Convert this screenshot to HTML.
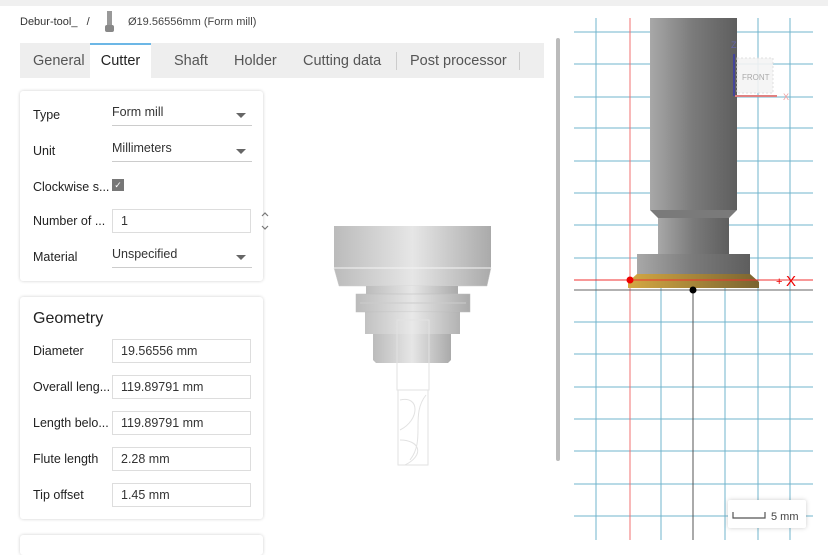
<!DOCTYPE html>
<html><head><style>
*{box-sizing:border-box;margin:0;padding:0}
body{width:828px;height:540px;overflow:hidden;background:#fff;font-family:"Liberation Sans",sans-serif;color:#222;position:relative}
.a{position:absolute}
.lab{position:absolute;left:13px;font-size:12.5px;color:#222}
.dd{position:absolute;left:92px;width:140px;height:23px;border-bottom:1px solid #ccc;font-size:12.5px;color:#333;padding-top:2px}
.dd:after{content:"";position:absolute;right:6px;top:10px;border:5px solid transparent;border-top:5px solid #666;border-bottom:none}
.in{position:absolute;left:92px;width:139px;height:24px;border:1px solid #ddd;font-size:12.5px;color:#333;padding:4px 8px}
.card{position:absolute;left:20px;width:243px;background:#fff;border-radius:3px;box-shadow:0 0 3px rgba(0,0,0,.2)}
.tab{position:absolute;top:0;height:35px;line-height:37px;font-size:14.5px;color:#555}
</style></head><body>
<div class="a" style="left:0;top:0;width:828px;height:6px;background:#f0f0f0"></div>
<div class="a" style="left:20px;top:16px;font-size:11px;color:#333">Debur-tool_ &nbsp; /</div>
<svg class="a" style="left:102px;top:11px" width="14" height="24"><rect x="5" y="0" width="5" height="15" fill="#999"/><rect x="3" y="14" width="9" height="7" rx="2" fill="#888"/></svg>
<div class="a" style="left:128px;top:16px;font-size:11px;color:#444">Ø19.56556mm (Form mill)</div>
<div class="a" style="left:20px;top:43px;width:524px;height:35px;background:#eee">
<div class="tab" style="left:13px">General</div>
<div class="tab" style="left:70px;width:61px;background:#fff;border-top:2px solid #6cb7e6;color:#222;text-align:center;line-height:33px">Cutter</div>
<div class="tab" style="left:154px">Shaft</div>
<div class="tab" style="left:214px">Holder</div>
<div class="tab" style="left:283px">Cutting data</div>
<div class="a" style="left:376px;top:9px;width:1px;height:18px;background:#ccc"></div>
<div class="tab" style="left:390px">Post processor</div>
<div class="a" style="left:499px;top:9px;width:1px;height:18px;background:#ccc"></div>
</div>
<div class="a" style="left:556px;top:38px;width:4px;height:423px;background:#bbb;border-radius:2px"></div>
<div class="card" style="top:91px;height:190px">
<div class="lab" style="top:17px">Type</div><div class="dd" style="top:12px">Form mill</div>
<div class="lab" style="top:53px">Unit</div><div class="dd" style="top:48px">Millimeters</div>
<div class="lab" style="top:89px">Clockwise s...</div><div class="a" style="left:92px;top:88px;width:12px;height:12px;background:#777;color:#fff;font-size:9px;text-align:center;line-height:12px">✓</div>
<div class="lab" style="top:123px">Number of ...</div><div class="in" style="top:118px">1</div>
<svg class="a" style="left:240px;top:119px" width="10" height="22"><path d="M2,6 L5,3 L8,6 M2,16 L5,19 L8,16" fill="none" stroke="#777" stroke-width="1.2"/></svg>
<div class="lab" style="top:159px">Material</div><div class="dd" style="top:154px">Unspecified</div>
</div>
<div class="card" style="top:297px;height:222px">
<div class="a" style="left:13px;top:13px;font-size:16px;color:#222">Geometry</div>
<div class="lab" style="top:47px">Diameter</div><div class="in" style="top:42px">19.56556 mm</div>
<div class="lab" style="top:83px">Overall leng...</div><div class="in" style="top:78px">119.89791 mm</div>
<div class="lab" style="top:119px">Length belo...</div><div class="in" style="top:114px">119.89791 mm</div>
<div class="lab" style="top:155px">Flute length</div><div class="in" style="top:150px">2.28 mm</div>
<div class="lab" style="top:191px">Tip offset</div><div class="in" style="top:186px">1.45 mm</div>
</div>
<div class="card" style="top:535px;height:20px"></div>
<svg class="a" style="left:0;top:0" width="828" height="540">
<defs>
<linearGradient id="h" x1="0" x2="1"><stop offset="0" stop-color="#bbb"/><stop offset=".5" stop-color="#e6e6e6"/><stop offset="1" stop-color="#aaa"/></linearGradient>
<linearGradient id="s" x1="0" x2="1"><stop offset="0" stop-color="#a8a8a8"/><stop offset=".5" stop-color="#7a7a7a"/><stop offset="1" stop-color="#5e5e5e"/></linearGradient>
<linearGradient id="g" x1="0" x2="1"><stop offset="0" stop-color="#d4a843"/><stop offset="1" stop-color="#7a6430"/></linearGradient>
</defs>
<rect x="334" y="226" width="157" height="42" fill="url(#h)"/>
<polygon points="334,268 491,268 487,286 339,286" fill="url(#h)" stroke="#ccc" stroke-width=".5"/>
<line x1="334" y1="268" x2="491" y2="268" stroke="#f4f4f4"/>
<rect x="366" y="286" width="92" height="8" fill="url(#h)"/>
<rect x="356" y="294" width="114" height="18" fill="url(#h)" stroke="#bbb" stroke-width=".5"/>
<line x1="360" y1="303" x2="466" y2="303" stroke="#ccc"/>
<rect x="365" y="312" width="95" height="22" fill="url(#h)" opacity=".9"/>
<polygon points="373,334 451,334 451,360 448,363 376,363 373,360" fill="url(#h)"/>
<g fill="none" stroke="#e2e2e2"><rect x="397" y="320" width="32" height="70"/><rect x="398" y="390" width="30" height="75"/><path d="M400,400 C420,395 420,420 400,430 M426,395 C410,415 426,440 410,460 M400,440 C420,440 425,455 405,465"/></g>
<g stroke="#70b4cc" stroke-width="1">
<line x1="596" y1="18" x2="596" y2="540"/><line x1="661" y1="18" x2="661" y2="540"/><line x1="693" y1="18" x2="693" y2="540"/><line x1="725" y1="18" x2="725" y2="540"/><line x1="758" y1="18" x2="758" y2="540"/><line x1="790" y1="18" x2="790" y2="540"/>
<line x1="574" y1="32" x2="813" y2="32"/><line x1="574" y1="64" x2="813" y2="64"/><line x1="574" y1="97" x2="813" y2="97"/><line x1="574" y1="128" x2="813" y2="128"/><line x1="574" y1="161" x2="813" y2="161"/><line x1="574" y1="193" x2="813" y2="193"/><line x1="574" y1="225" x2="813" y2="225"/><line x1="574" y1="258" x2="813" y2="258"/><line x1="574" y1="322" x2="813" y2="322"/><line x1="574" y1="354" x2="813" y2="354"/><line x1="574" y1="387" x2="813" y2="387"/><line x1="574" y1="419" x2="813" y2="419"/><line x1="574" y1="451" x2="813" y2="451"/><line x1="574" y1="484" x2="813" y2="484"/><line x1="574" y1="516" x2="813" y2="516"/>
</g>
<line x1="630" y1="18" x2="630" y2="540" stroke="#f07070"/>
<line x1="693" y1="290" x2="693" y2="540" stroke="#555"/>
<line x1="574" y1="290" x2="813" y2="290" stroke="#666"/>
<rect x="650" y="18" width="87" height="192" fill="url(#s)"/>
<polygon points="650,210 737,210 729,218 658,218" fill="#7a7a7a"/>
<rect x="658" y="218" width="71" height="36" fill="url(#s)"/>
<rect x="637" y="254" width="113" height="20" fill="url(#s)"/>
<polygon points="637,274 750,274 759,282 759,288 628,288 628,282" fill="url(#g)"/>
<line x1="574" y1="280" x2="813" y2="280" stroke="#f03030"/>
<circle cx="630" cy="280" r="3.5" fill="#e00"/>
<circle cx="693" cy="290" r="3.5" fill="#000"/>
<text x="776" y="285" fill="#e00" font-size="11" font-family="Liberation Sans">+</text>
<text x="786" y="286" fill="#e00" font-size="15" font-family="Liberation Sans">X</text>
<rect x="737" y="58" width="36" height="35" fill="#f4f4f4" stroke="#ddd" stroke-dasharray="2,2" opacity=".9"/>
<text x="742" y="80" fill="#aaa" font-size="8" font-family="Liberation Sans">FRONT</text>
<line x1="734" y1="54" x2="734" y2="96" stroke="#44449a" stroke-width="2"/>
<line x1="735" y1="96" x2="777" y2="96" stroke="#e08080" stroke-width="2"/>
<text x="731" y="48" fill="#6666aa" font-size="9" font-family="Liberation Sans">Z</text>
<text x="783" y="100" fill="#f0a0a0" font-size="9" font-family="Liberation Sans">X</text>
<rect x="728" y="500" width="78" height="28" fill="#fff" rx="2" style="filter:drop-shadow(0 0 2px rgba(0,0,0,.2))"/>
<path d="M733,512 V518 H765 V512" fill="none" stroke="#555" stroke-width="1.2"/>
<text x="771" y="520" fill="#444" font-size="11" font-family="Liberation Sans">5 mm</text>
</svg>
</body></html>
